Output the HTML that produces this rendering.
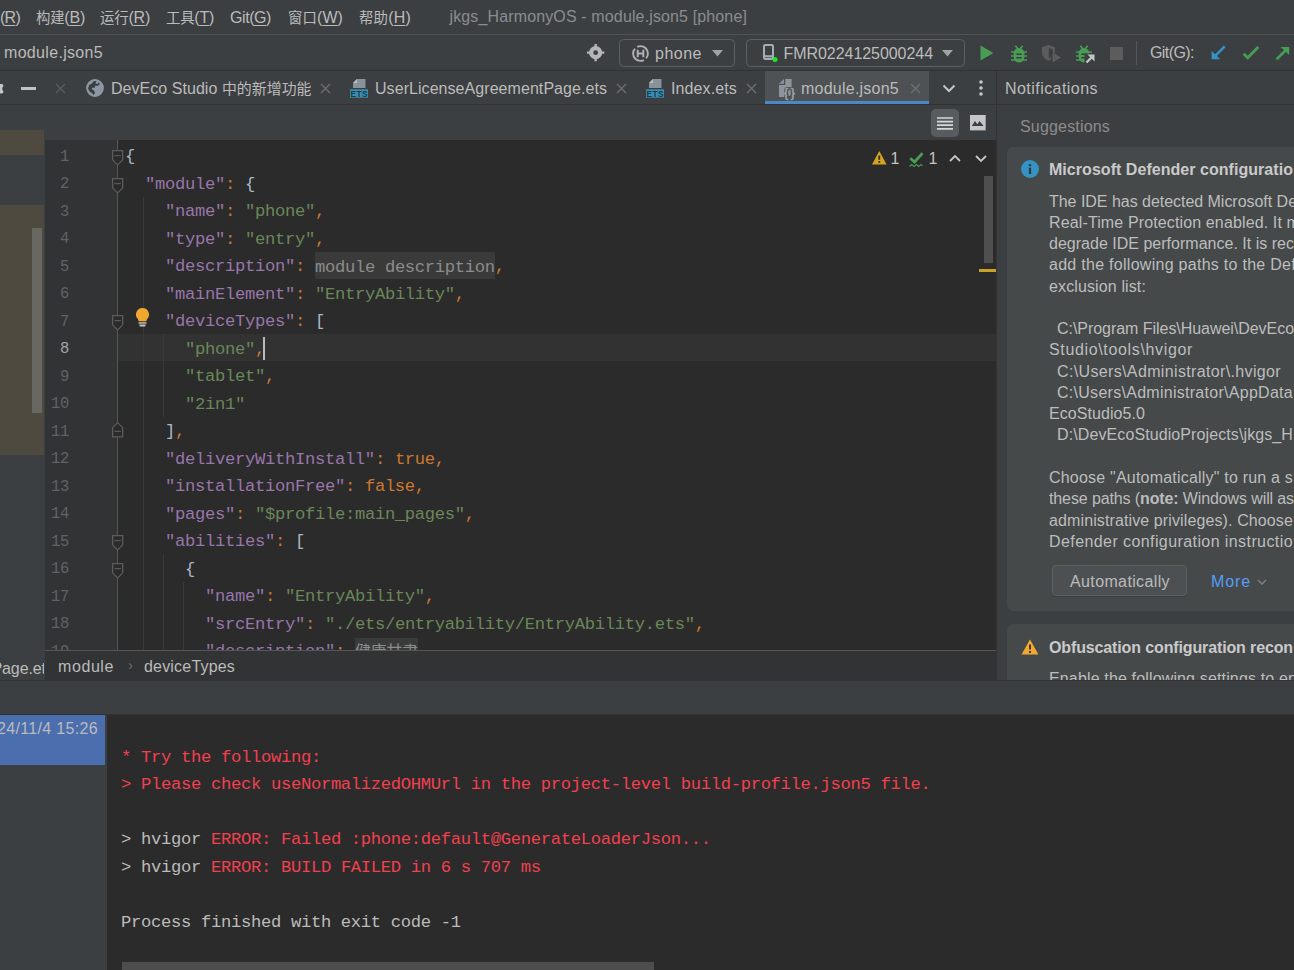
<!DOCTYPE html>
<html><head><meta charset="utf-8"><title>module.json5</title>
<style>
*{box-sizing:border-box;margin:0;padding:0}
html,body{width:1294px;height:970px;overflow:hidden;background:#3c3f41}
body{position:relative;font-family:"Liberation Sans","Noto Sans CJK SC",sans-serif;color:#bbbbbb;font-size:15.5px}
.a{position:absolute;white-space:nowrap}
.m{position:absolute;white-space:pre;font-family:"Liberation Mono","Noto Sans CJK SC",monospace;font-size:17.2px;letter-spacing:-0.32px;line-height:27.5px;height:27.5px;color:#a9b7c6}
.k{color:#9876aa}.s{color:#6a8759}.o{color:#cc7832}
.ln{position:absolute;left:45px;width:24px;text-align:right;transform:scaleX(0.9);transform-origin:100% 50%;color:#606366;font-family:"Liberation Mono",monospace;font-size:17.2px;letter-spacing:-0.32px;line-height:27.5px;height:27.5px}
u{text-decoration:underline;text-underline-offset:2px;text-decoration-thickness:1px}
svg{position:absolute;overflow:visible}
</style></head><body>
<div class="a" style="left:0px;top:34px;width:1294px;height:1px;background:#515151;"></div>
<div class="a" style="left:0px;top:70px;width:1294px;height:1px;background:#323232;"></div>
<svg style="left:586.500px;top:44.400px" width="17.300" height="17.300" viewBox="0 0 17.300 17.300"><circle cx="8.650" cy="8.650" r="4.500" fill="none" stroke="#b4b6b8" stroke-width="4.200"/><path d="M8.650 0v3M8.650 14.300v3M0 8.650h3M14.300 8.650h3" stroke="#b4b6b8" stroke-width="2.400"/></svg>
<div class="a" style="left:619px;top:39px;width:116px;height:27.500px;border:1px solid #5e6163;border-radius:4.500px"></div>
<svg style="left:631.500px;top:44.500px" width="17" height="17" viewBox="0 0 17 17"><circle cx="8.500" cy="8.500" r="7.400" fill="none" stroke="#afb1b3" stroke-width="1.900" stroke-dasharray="20.500 2.750" stroke-dashoffset="-8"/><path d="M5.700 4.700v7.600M11.300 4.700v7.600M5.700 8.500h5.600" stroke="#afb1b3" stroke-width="2" fill="none"/></svg>
<svg style="left:712.200px;top:50.400px" width="11" height="6.500" viewBox="0 0 11 6.500"><path d="M0 0h11L5.500 6.500z" fill="#a0a2a4"/></svg>
<div class="a" style="left:746px;top:39px;width:218.700px;height:27.500px;border:1px solid #5e6163;border-radius:4.500px"></div>
<svg style="left:762.300px;top:44.400px" width="16" height="18" viewBox="0 0 16 18"><rect x="2" y="1" width="9" height="14" rx="1.200" fill="none" stroke="#a4adb4" stroke-width="2"/><path d="M2 12.300h9" stroke="#a4adb4" stroke-width="2.200"/><circle cx="13" cy="15.500" r="2.500" fill="#1ee81e"/></svg>
<svg style="left:942.200px;top:50.400px" width="11" height="6.500" viewBox="0 0 11 6.500"><path d="M0 0h11L5.500 6.500z" fill="#a0a2a4"/></svg>
<svg style="left:980px;top:45px" width="14" height="16" viewBox="0 0 14 16"><path d="M0.5 0.5L13.5 8L0.5 15.5z" fill="#499c54"/></svg>
<svg style="left:1011px;top:44.500px" width="16" height="18" viewBox="0 0 16 18"><rect x="2.600" y="3" width="10.800" height="14.500" rx="5.400" fill="#499c54"/><path d="M0 7h16M0 11h16M0 15h16" stroke="#499c54" stroke-width="1.700"/><path d="M4.300 0.700l2.700 3.300M11.700 0.700l-2.700 3.300" stroke="#499c54" stroke-width="1.700" fill="none"/><path d="M5.300 9.300h5.400M5.300 12.700h5.400" stroke="#3c3f41" stroke-width="1.400"/></svg>
<svg style="left:1042px;top:45px" width="20" height="18" viewBox="0 0 20 18"><path d="M0 2.200L6.500 0L13 2.200V7.500C13 11.500 10.500 14 6.500 15.500C2.500 14 0 11.500 0 7.500z" fill="#5c5c5c"/><path d="M6.800 3v10.500c2.600-1 4-3 4-6V4.300z" fill="#3c3f41"/><path d="M9 6L20 12L9 18z" fill="#3c3f41"/><path d="M10.500 7.500L19 12.500L10.500 17.500z" fill="#5c5c5c"/></svg>
<svg style="left:1076px;top:44.500px" width="19" height="19" viewBox="0 0 19 19"><rect x="2.600" y="3" width="10.800" height="14.500" rx="5.400" fill="#499c54"/><path d="M0 7h16M0 11h16M0 15h16" stroke="#499c54" stroke-width="1.700"/><path d="M4.300 0.700l2.700 3.300M11.700 0.700l-2.700 3.300" stroke="#499c54" stroke-width="1.700" fill="none"/><path d="M5.300 9.300h5.400M5.300 12.700h5.400" stroke="#3c3f41" stroke-width="1.400"/><rect x="8.500" y="8.500" width="11" height="11" fill="#3c3f41"/><path d="M10.500 17.500L17 11" stroke="#c4c6c8" stroke-width="2.400" fill="none"/><path d="M11.500 9.500h7v7z" fill="#c4c6c8"/></svg>
<div class="a" style="left:1110px;top:47px;width:12.5px;height:12.5px;background:#5c5c5c;"></div>
<div class="a" style="left:1136px;top:41px;width:1px;height:24px;background:#555555;"></div>
<svg style="left:1200px;top:38px" width="94" height="30" viewBox="0 0 94 30"><path d="M24.700 8.400L15.500 17.600" stroke="#3592c4" stroke-width="2.600"/><path d="M11.600 12.700V21.200H20.300z" fill="#3592c4"/><path d="M43.700 15.800L47.700 19.800L58.300 8.900" stroke="#499c54" stroke-width="2.800" fill="none"/><path d="M76.600 21.200L85.500 12.500" stroke="#499c54" stroke-width="2.600"/><path d="M80.600 9.100H89.200V17.100z" fill="#499c54"/></svg>
<div class="a" style="left:0px;top:104px;width:1294px;height:1px;background:#323232;"></div>
<svg style="left:0;top:83.500px" width="4" height="9.500" viewBox="0 0 4 9.500"><path d="M0 0H1.800L3.300 0.800V2.600L2.300 3.400V6.100L3.300 6.900V8.700L1.800 9.500H0z" fill="#c4c6c8"/></svg>
<div class="a" style="left:20.5px;top:87px;width:15px;height:2.5px;background:#c0c2c4;"></div>
<svg style="left:55px;top:83px" width="11" height="11" viewBox="0 0 11 11"><path d="M1 1l9 9M10 1l-9 9" stroke="#5a5d5f" stroke-width="1.300" fill="none"/></svg>
<svg style="left:86px;top:79px" width="18" height="18" viewBox="0 0 18 18"><circle cx="9" cy="9" r="8.200" fill="#8b98a3" stroke="#8b98a3" stroke-width="1.400"/><path d="M2 9.500L3.200 6L6 4.500L7.500 2.200L10.500 2L9.500 4.500L11.500 5L12.500 3.500L14 5L11.500 7L9.500 6.500L8.500 9L6.500 8.500L5.500 10L8 11.500L9 14L7.500 16L5.500 13.500L4 13z" fill="#3c3f41"/></svg>
<svg style="left:320px;top:83px" width="11" height="11" viewBox="0 0 11 11"><path d="M1 1l9 9M10 1l-9 9" stroke="#6e6e6e" stroke-width="1.300" fill="none"/></svg>
<svg style="left:350px;top:79px" width="18" height="19" viewBox="0 0 18 19"><path d="M7 0h8.500v9H3V4z" fill="#8a9299"/><path d="M7 0v4H3z" fill="#b9c0c6"/><rect x="0" y="10.300" width="18" height="8.400" fill="#3a8fb3"/><text x="9.200" y="17.600" font-family="Liberation Sans,sans-serif" font-size="8.300" font-weight="bold" fill="#1c3c4b" text-anchor="middle" letter-spacing="0.500">ETS</text></svg>
<svg style="left:615.5px;top:83px" width="11" height="11" viewBox="0 0 11 11"><path d="M1 1l9 9M10 1l-9 9" stroke="#6e6e6e" stroke-width="1.300" fill="none"/></svg>
<svg style="left:646px;top:79px" width="18" height="19" viewBox="0 0 18 19"><path d="M7 0h8.500v9H3V4z" fill="#8a9299"/><path d="M7 0v4H3z" fill="#b9c0c6"/><rect x="0" y="10.300" width="18" height="8.400" fill="#3a8fb3"/><text x="9.200" y="17.600" font-family="Liberation Sans,sans-serif" font-size="8.300" font-weight="bold" fill="#1c3c4b" text-anchor="middle" letter-spacing="0.500">ETS</text></svg>
<svg style="left:745.5px;top:83px" width="11" height="11" viewBox="0 0 11 11"><path d="M1 1l9 9M10 1l-9 9" stroke="#6e6e6e" stroke-width="1.300" fill="none"/></svg>
<div class="a" style="left:765px;top:71px;width:164px;height:33px;background:#4e5254;"></div>
<div class="a" style="left:765px;top:100.5px;width:164px;height:3.5px;background:#4a88c7;"></div>
<svg style="left:778.800px;top:79px" width="18" height="21" viewBox="0 0 18 21"><path d="M0 4.800L5 0V4.800z" fill="#8c959c"/><path d="M6.300 0H12.600V18H0V6.100H6.300z" fill="#8c959c"/><rect x="5.300" y="8" width="12" height="12.500" rx="3" fill="#4e5254"/><text x="11.700" y="17.800" font-family="Liberation Sans,sans-serif" font-size="12.500" fill="#9aa5ad" text-anchor="middle" letter-spacing="2.600" stroke="#9aa5ad" stroke-width="0.500">{}</text><ellipse cx="10.500" cy="13.700" rx="1.300" ry="3.200" fill="#8c959c"/></svg>
<svg style="left:909.5px;top:83px" width="11" height="11" viewBox="0 0 11 11"><path d="M1 1l9 9M10 1l-9 9" stroke="#6c7072" stroke-width="1.300" fill="none"/></svg>
<svg style="left:942px;top:84px" width="14" height="9" viewBox="0 0 14 9"><path d="M1.500 1.500L7 7l5.500-5.500" stroke="#c4c6c8" stroke-width="2" fill="none"/></svg>
<svg style="left:978px;top:79px" width="6" height="18" viewBox="0 0 6 18"><circle cx="3" cy="3" r="1.800" fill="#c4c6c8"/><circle cx="3" cy="9" r="1.800" fill="#c4c6c8"/><circle cx="3" cy="15" r="1.800" fill="#c4c6c8"/></svg>
<div class="a" style="left:996px;top:71px;width:1px;height:610px;background:#323232;"></div>
<div class="a" style="left:0px;top:130px;width:44px;height:325px;background:#4e4a3f;"></div>
<div class="a" style="left:0px;top:155px;width:44px;height:50px;background:#3c3f41;"></div>
<div class="a" style="left:32px;top:228px;width:10px;height:185px;background:#696761;"></div>
<div class="a" style="left:931px;top:109px;width:28px;height:28px;background:#595c5e;border-radius:5px"></div>
<svg style="left:937px;top:117px" width="16" height="13" viewBox="0 0 16 13"><path d="M0 1h16M0 4.600h16M0 8.200h16M0 11.800h16" stroke="#d4d6d8" stroke-width="1.700"/></svg>
<svg style="left:970px;top:115.300px" width="15.700" height="15.400" viewBox="0 0 15.700 15.400"><rect x="0" y="0" width="15.700" height="15.400" fill="#c4c6c8"/><path d="M1.800 11l3.200-5 2.300 3.300 2.200-3.300 4.200 5z" fill="#3c3f41"/></svg>
<div class="a" style="left:45px;top:140px;width:951px;height:511px;background:#2b2b2b;overflow:hidden">
<div class="a" style="left:0;top:0;width:72px;height:511px;background:#313335"></div>
<div class="a" style="left:72px;top:194px;width:879px;height:27px;background:#323232"></div>
<div class="a" style="left:72px;top:0;width:1px;height:511px;background:#555555"></div>
<div class="a" style="left:98px;top:56.50px;width:1px;height:467.50px;background:#393939"></div>
<div class="a" style="left:118px;top:194.00px;width:1px;height:82.50px;background:#393939"></div>
<div class="a" style="left:118px;top:414.00px;width:1px;height:110.00px;background:#393939"></div>
<div class="a" style="left:138px;top:441.50px;width:1px;height:82.50px;background:#393939"></div>
<div class="ln" style="left:0;top:2.67px;color:#606366">1</div>
<div class="ln" style="left:0;top:30.17px;color:#606366">2</div>
<div class="ln" style="left:0;top:57.67px;color:#606366">3</div>
<div class="ln" style="left:0;top:85.17px;color:#606366">4</div>
<div class="ln" style="left:0;top:112.67px;color:#606366">5</div>
<div class="ln" style="left:0;top:140.17px;color:#606366">6</div>
<div class="ln" style="left:0;top:167.67px;color:#606366">7</div>
<div class="ln" style="left:0;top:195.17px;color:#a4a3a3">8</div>
<div class="ln" style="left:0;top:222.67px;color:#606366">9</div>
<div class="ln" style="left:0;top:250.17px;color:#606366">10</div>
<div class="ln" style="left:0;top:277.67px;color:#606366">11</div>
<div class="ln" style="left:0;top:305.17px;color:#606366">12</div>
<div class="ln" style="left:0;top:332.67px;color:#606366">13</div>
<div class="ln" style="left:0;top:360.17px;color:#606366">14</div>
<div class="ln" style="left:0;top:387.67px;color:#606366">15</div>
<div class="ln" style="left:0;top:415.17px;color:#606366">16</div>
<div class="ln" style="left:0;top:442.67px;color:#606366">17</div>
<div class="ln" style="left:0;top:470.17px;color:#606366">18</div>
<div class="ln" style="left:0;top:497.67px;color:#606366">19</div>
<div class="m" style="left:80px;top:3.27px">{</div>
<div class="m" style="left:80px;top:30.77px">  <span class="k">&quot;module&quot;</span><span class="o">:</span> {</div>
<div class="m" style="left:80px;top:58.27px">    <span class="k">&quot;name&quot;</span><span class="o">:</span> <span class="s">&quot;phone&quot;</span><span class="o">,</span></div>
<div class="m" style="left:80px;top:85.77px">    <span class="k">&quot;type&quot;</span><span class="o">:</span> <span class="s">&quot;entry&quot;</span><span class="o">,</span></div>
<div class="m" style="left:80px;top:113.27px">    <span class="k">&quot;description&quot;</span><span class="o">:</span> <span style="background:#3a3a3a;color:#8c8c8c;padding:5.500px 0 3px">module description</span><span class="o">,</span></div>
<div class="m" style="left:80px;top:140.77px">    <span class="k">&quot;mainElement&quot;</span><span class="o">:</span> <span class="s">&quot;EntryAbility&quot;</span><span class="o">,</span></div>
<div class="m" style="left:80px;top:168.27px">    <span class="k">&quot;deviceTypes&quot;</span><span class="o">:</span> [</div>
<div class="m" style="left:80px;top:195.77px">      <span class="s">&quot;phone&quot;</span><span class="o">,</span></div>
<div class="m" style="left:80px;top:223.27px">      <span class="s">&quot;tablet&quot;</span><span class="o">,</span></div>
<div class="m" style="left:80px;top:250.77px">      <span class="s">&quot;2in1&quot;</span></div>
<div class="m" style="left:80px;top:278.27px">    ]<span class="o">,</span></div>
<div class="m" style="left:80px;top:305.77px">    <span class="k">&quot;deliveryWithInstall&quot;</span><span class="o">:</span> <span class="o">true,</span></div>
<div class="m" style="left:80px;top:333.27px">    <span class="k">&quot;installationFree&quot;</span><span class="o">:</span> <span class="o">false,</span></div>
<div class="m" style="left:80px;top:360.77px">    <span class="k">&quot;pages&quot;</span><span class="o">:</span> <span class="s">&quot;$profile:main_pages&quot;</span><span class="o">,</span></div>
<div class="m" style="left:80px;top:388.27px">    <span class="k">&quot;abilities&quot;</span><span class="o">:</span> [</div>
<div class="m" style="left:80px;top:415.77px">      {</div>
<div class="m" style="left:80px;top:443.27px">        <span class="k">&quot;name&quot;</span><span class="o">:</span> <span class="s">&quot;EntryAbility&quot;</span><span class="o">,</span></div>
<div class="m" style="left:80px;top:470.77px">        <span class="k">&quot;srcEntry&quot;</span><span class="o">:</span> <span class="s">&quot;./ets/entryability/EntryAbility.ets&quot;</span><span class="o">,</span></div>
<div class="m" style="left:80px;top:498.27px">        <span class="k">&quot;description&quot;</span><span class="o">:</span> <span style="background:#3a3a3a;color:#8c8c8c;padding:5.500px 0 3px;font-size:15.800px;letter-spacing:0">健康甘肃</span></div>
<div class="a" style="left:218px;top:197.00px;width:2px;height:23px;background:#bbbbbb"></div>
<svg style="left:66.85px;top:10.00px" width="11.300" height="15.500" viewBox="0 0 11.300 15.500"><path d="M0.650 0.650h10v9.200l-5 5l-5-5z" fill="#2b2b2b" stroke="#5c5c5c" stroke-width="1.300"/><path d="M2.400 5.7h6.500" stroke="#636363" stroke-width="1"/></svg>
<svg style="left:66.85px;top:37.50px" width="11.300" height="15.500" viewBox="0 0 11.300 15.500"><path d="M0.650 0.650h10v9.200l-5 5l-5-5z" fill="#2b2b2b" stroke="#5c5c5c" stroke-width="1.300"/><path d="M2.400 5.7h6.500" stroke="#636363" stroke-width="1"/></svg>
<svg style="left:66.85px;top:175.00px" width="11.300" height="15.500" viewBox="0 0 11.300 15.500"><path d="M0.650 0.650h10v9.200l-5 5l-5-5z" fill="#2b2b2b" stroke="#5c5c5c" stroke-width="1.300"/><path d="M2.400 5.7h6.500" stroke="#636363" stroke-width="1"/></svg>
<svg style="left:66.85px;top:395.00px" width="11.300" height="15.500" viewBox="0 0 11.300 15.500"><path d="M0.650 0.650h10v9.200l-5 5l-5-5z" fill="#2b2b2b" stroke="#5c5c5c" stroke-width="1.300"/><path d="M2.400 5.7h6.500" stroke="#636363" stroke-width="1"/></svg>
<svg style="left:66.85px;top:422.50px" width="11.300" height="15.500" viewBox="0 0 11.300 15.500"><path d="M0.650 0.650h10v9.200l-5 5l-5-5z" fill="#2b2b2b" stroke="#5c5c5c" stroke-width="1.300"/><path d="M2.400 5.7h6.500" stroke="#636363" stroke-width="1"/></svg>
<svg style="left:66.85px;top:281.50px" width="11.300" height="15.500" viewBox="0 0 11.300 15.500"><path d="M0.650 14.850h10v-9.200l-5-5l-5 5z" fill="#2b2b2b" stroke="#5c5c5c" stroke-width="1.300"/><path d="M2.400 9.3h6.500" stroke="#636363" stroke-width="1"/></svg>
<svg style="left:91px;top:167.70px" width="13" height="19" viewBox="0 0 13 19"><path d="M6.500 0a6.500 6.500 0 0 1 4.600 11.100L10.300 13.300H2.700L1.900 11.100A6.500 6.500 0 0 1 6.500 0z" fill="#f2a72e"/><rect x="2.500" y="14.300" width="8" height="1.300" fill="#d4d4d4"/><path d="M3.300 16.400h6.400l-0.500 2h-5.400z" fill="#c4c4c4"/></svg>
<svg style="left:826.7px;top:11px" width="14.600" height="13.400" viewBox="0 0 14.600 13.400"><path d="M7.300 0L14.600 13.400H0z" fill="#d6a321"/><path d="M7.300 4.500v4.300M7.300 10v1.800" stroke="#2b2b2b" stroke-width="1.800"/></svg>
<svg style="left:863.5px;top:11.5px" width="15" height="16" viewBox="0 0 15 16"><path d="M1.300 6.300L5.500 10L13.500 1.200" stroke="#499c54" stroke-width="2.800" fill="none"/><path d="M0.500 14.500l2.300-2 2.300 2 2.300-2 2.300 2 2.300-2 1.500 1.300" stroke="#499c54" stroke-width="1.100" fill="none"/></svg>
<svg style="left:904px;top:13.5px" width="12" height="8" viewBox="0 0 12 8"><path d="M1 7l5-5 5 5" stroke="#c4c6c8" stroke-width="1.800" fill="none"/></svg>
<svg style="left:930px;top:14.800000000000011px" width="12" height="8" viewBox="0 0 12 8"><path d="M1 1l5 5 5-5" stroke="#c4c6c8" stroke-width="1.800" fill="none"/></svg>
<div class="a" style="left:939px;top:36px;width:9px;height:87px;background:#4f4f4f"></div>
<div class="a" style="left:934px;top:129px;width:17px;height:3px;background:#c9a227"></div>
</div>
<div class="a" style="left:45px;top:650px;width:951px;height:1px;background:#555555;"></div>
<div class="a" style="left:45px;top:651px;width:951px;height:29px;background:#313335;"></div>
<div class="a" style="left:0;top:651px;width:44px;height:29px;overflow:hidden"><span class="a" style="left:-8.500px;top:8px;font-size:16px;line-height:20px;letter-spacing:-0.100px">Page.ets</span></div>
<div class="a" style="left:1007.3px;top:146.7px;width:300px;height:464px;background:#45494a;border-radius:6.500px"></div>
<svg style="left:1021px;top:160px" width="18" height="18" viewBox="0 0 18 18"><circle cx="9" cy="9" r="9" fill="#3592c4"/><path d="M9 7.700v6.300" stroke="#35383a" stroke-width="2.300"/><rect x="7.850" y="4.200" width="2.300" height="2" fill="#35383a"/></svg>
<div class="a" style="left:1049px;top:147px;width:245px;height:464px;overflow:hidden"></div>
<div class="a" style="left:1052px;top:565px;width:135px;height:31px;border:1px solid #5e6060;border-radius:4px;background:#4c5052;box-shadow:0 1px 0 #3b3e40"></div>
<svg style="left:1257px;top:578.500px" width="10" height="7" viewBox="0 0 10 7"><path d="M1 1l4 4 4-4" stroke="#7a7e80" stroke-width="1.600" fill="none"/></svg>
<div class="a" style="left:1007.3px;top:624px;width:300px;height:57px;background:#45494a;border-radius:6.500px 6.500px 0 0"></div>
<svg style="left:1021px;top:639px" width="18" height="16" viewBox="0 0 18 16"><path d="M9 0.500L17.500 15.500H0.500z" fill="#f2a72e"/><path d="M9 5.500v5M9 12v2" stroke="#3a3d40" stroke-width="2"/></svg>
<div class="a" style="left:0px;top:714px;width:1294px;height:1px;background:#323232;"></div>
<div class="a" style="left:0px;top:715px;width:105px;height:50px;background:#4b6eaf;"></div>
<div class="a" style="left:106.5px;top:714.5px;width:1188px;height:256px;background:#2b2b2b;"></div>
<div class="m" style="left:121px;top:743.67px;color:#bbbbbb"><span style="color:#f2404f">* Try the following:</span></div>
<div class="m" style="left:121px;top:771.17px;color:#bbbbbb"><span style="color:#f2404f">&gt; Please check useNormalizedOHMUrl in the project-level build-profile.json5 file.</span></div>
<div class="m" style="left:121px;top:826.17px;color:#bbbbbb">&gt; hvigor <span style="color:#f2404f">ERROR: Failed :phone:default@GenerateLoaderJson...</span></div>
<div class="m" style="left:121px;top:853.67px;color:#bbbbbb">&gt; hvigor <span style="color:#f2404f">ERROR: BUILD FAILED in 6 s 707 ms</span></div>
<div class="m" style="left:121px;top:908.67px;color:#bbbbbb">Process finished with exit code -1</div>
<div class="a" style="left:122px;top:962px;width:531.5px;height:8px;background:#4d4d4d;"></div>
<span class="a" style='left:0px;top:7.50px;font-size:16px;line-height:20px;color:#bbbbbb;font-family:"Liberation Sans","Noto Sans CJK SC",sans-serif;letter-spacing:-0.740px;'>(<u>R</u>)</span>
<span class="a" style='left:36px;top:7.50px;font-size:16px;line-height:20px;color:#bbbbbb;font-family:"Liberation Sans","Noto Sans CJK SC",sans-serif;letter-spacing:-0.225px;'><span style="font-size:14.400px">构建</span>(<u>B</u>)</span>
<span class="a" style='left:100px;top:7.50px;font-size:16px;line-height:20px;color:#bbbbbb;font-family:"Liberation Sans","Noto Sans CJK SC",sans-serif;letter-spacing:-0.203px;'><span style="font-size:14.400px">运行</span>(<u>R</u>)</span>
<span class="a" style='left:166px;top:7.50px;font-size:16px;line-height:20px;color:#bbbbbb;font-family:"Liberation Sans","Noto Sans CJK SC",sans-serif;letter-spacing:-0.247px;'><span style="font-size:14.400px">工具</span>(<u>T</u>)</span>
<span class="a" style='left:230px;top:7.50px;font-size:16px;line-height:20px;color:#bbbbbb;font-family:"Liberation Sans","Noto Sans CJK SC",sans-serif;letter-spacing:-0.427px;'>Git(<u>G</u>)</span>
<span class="a" style='left:288px;top:7.50px;font-size:16px;line-height:20px;color:#bbbbbb;font-family:"Liberation Sans","Noto Sans CJK SC",sans-serif;letter-spacing:0.087px;'><span style="font-size:14.400px">窗口</span>(<u>W</u>)</span>
<span class="a" style='left:359px;top:7.50px;font-size:16px;line-height:20px;color:#bbbbbb;font-family:"Liberation Sans","Noto Sans CJK SC",sans-serif;letter-spacing:0.197px;'><span style="font-size:14.400px">帮助</span>(<u>H</u>)</span>
<span class="a" style='left:449.5px;top:6.50px;font-size:16px;line-height:20px;color:#8a8d8f;font-family:"Liberation Sans","Noto Sans CJK SC",sans-serif;letter-spacing:0.133px;'>jkgs_HarmonyOS - module.json5 [phone]</span>
<span class="a" style='left:4px;top:42.50px;font-size:16px;line-height:20px;color:#bbbbbb;font-family:"Liberation Sans","Noto Sans CJK SC",sans-serif;letter-spacing:0.319px;'>module.json5</span>
<span class="a" style='left:655px;top:44.00px;font-size:16px;line-height:20px;color:#bbbbbb;font-family:"Liberation Sans","Noto Sans CJK SC",sans-serif;letter-spacing:0.500px;'>phone</span>
<span class="a" style='left:783.5px;top:44.00px;font-size:16px;line-height:20px;color:#bbbbbb;font-family:"Liberation Sans","Noto Sans CJK SC",sans-serif;letter-spacing:-0.053px;'>FMR0224125000244</span>
<span class="a" style='left:1150px;top:42.50px;font-size:16px;line-height:20px;color:#bbbbbb;font-family:"Liberation Sans","Noto Sans CJK SC",sans-serif;letter-spacing:-0.571px;'>Git(G):</span>
<span class="a" style='left:111px;top:78.50px;font-size:16px;line-height:20px;color:#bbbbbb;font-family:"Liberation Sans","Noto Sans CJK SC",sans-serif;letter-spacing:0.043px;'>DevEco Studio <span style="font-size:14.900px">中的新增功能</span></span>
<span class="a" style='left:375px;top:78.50px;font-size:16px;line-height:20px;color:#bbbbbb;font-family:"Liberation Sans","Noto Sans CJK SC",sans-serif;letter-spacing:0.059px;'>UserLicenseAgreementPage.ets</span>
<span class="a" style='left:671px;top:78.50px;font-size:16px;line-height:20px;color:#bbbbbb;font-family:"Liberation Sans","Noto Sans CJK SC",sans-serif;letter-spacing:0.118px;'>Index.ets</span>
<span class="a" style='left:801px;top:78.50px;font-size:16px;line-height:20px;color:#bbbbbb;font-family:"Liberation Sans","Noto Sans CJK SC",sans-serif;letter-spacing:0.236px;'>module.json5</span>
<span class="a" style='left:1005px;top:78.50px;font-size:16px;line-height:20px;color:#bbbbbb;font-family:"Liberation Sans","Noto Sans CJK SC",sans-serif;letter-spacing:0.450px;'>Notifications</span>
<span class="a" style='left:890.5px;top:149.00px;font-size:16px;line-height:20px;color:#c4c4c4;font-family:"Liberation Sans","Noto Sans CJK SC",sans-serif;letter-spacing:-2.406px;'>1</span>
<span class="a" style='left:928.5px;top:149.00px;font-size:16px;line-height:20px;color:#c4c4c4;font-family:"Liberation Sans","Noto Sans CJK SC",sans-serif;letter-spacing:-2.406px;'>1</span>
<span class="a" style='left:58px;top:656.50px;font-size:16px;line-height:20px;color:#bbbbbb;font-family:"Liberation Sans","Noto Sans CJK SC",sans-serif;letter-spacing:0.586px;'>module</span>
<span class="a" style='left:128px;top:655.00px;font-size:15px;line-height:20px;color:#6e6e6e;font-family:"Liberation Sans","Noto Sans CJK SC",sans-serif;'>›</span>
<span class="a" style='left:144px;top:656.50px;font-size:16px;line-height:20px;color:#bbbbbb;font-family:"Liberation Sans","Noto Sans CJK SC",sans-serif;letter-spacing:0.188px;'>deviceTypes</span>
<span class="a" style='left:1020px;top:117.00px;font-size:16px;line-height:20px;color:#8c8c8c;font-family:"Liberation Sans","Noto Sans CJK SC",sans-serif;letter-spacing:0.176px;'>Suggestions</span>
<span class="a" style='left:1049px;top:159.50px;font-size:16px;line-height:20px;color:#cacaca;font-family:"Liberation Sans","Noto Sans CJK SC",sans-serif;font-weight:bold;letter-spacing:0.042px;'>Microsoft Defender configuratio</span>
<span class="a" style='left:1049px;top:191.50px;font-size:16px;line-height:20px;color:#bdbdbd;font-family:"Liberation Sans","Noto Sans CJK SC",sans-serif;letter-spacing:-0.030px;'>The IDE has detected Microsoft De</span>
<span class="a" style='left:1049px;top:212.77px;font-size:16px;line-height:20px;color:#bdbdbd;font-family:"Liberation Sans","Noto Sans CJK SC",sans-serif;letter-spacing:0.129px;'>Real-Time Protection enabled. It m</span>
<span class="a" style='left:1049px;top:234.04px;font-size:16px;line-height:20px;color:#bdbdbd;font-family:"Liberation Sans","Noto Sans CJK SC",sans-serif;letter-spacing:0.013px;'>degrade IDE performance. It is rec</span>
<span class="a" style='left:1049px;top:255.31px;font-size:16px;line-height:20px;color:#bdbdbd;font-family:"Liberation Sans","Noto Sans CJK SC",sans-serif;letter-spacing:0.279px;'>add the following paths to the Def</span>
<span class="a" style='left:1049px;top:276.58px;font-size:16px;line-height:20px;color:#bdbdbd;font-family:"Liberation Sans","Noto Sans CJK SC",sans-serif;letter-spacing:0.123px;'>exclusion list:</span>
<span class="a" style='left:1057px;top:319.12px;font-size:16px;line-height:20px;color:#bdbdbd;font-family:"Liberation Sans","Noto Sans CJK SC",sans-serif;letter-spacing:-0.043px;'>C:\Program Files\Huawei\DevEco</span>
<span class="a" style='left:1049px;top:340.39px;font-size:16px;line-height:20px;color:#bdbdbd;font-family:"Liberation Sans","Noto Sans CJK SC",sans-serif;letter-spacing:0.650px;'>Studio\tools\hvigor</span>
<span class="a" style='left:1057px;top:361.66px;font-size:16px;line-height:20px;color:#bdbdbd;font-family:"Liberation Sans","Noto Sans CJK SC",sans-serif;letter-spacing:0.354px;'>C:\Users\Administrator\.hvigor</span>
<span class="a" style='left:1057px;top:382.93px;font-size:16px;line-height:20px;color:#bdbdbd;font-family:"Liberation Sans","Noto Sans CJK SC",sans-serif;letter-spacing:0.279px;'>C:\Users\Administrator\AppData</span>
<span class="a" style='left:1049px;top:404.20px;font-size:16px;line-height:20px;color:#bdbdbd;font-family:"Liberation Sans","Noto Sans CJK SC",sans-serif;letter-spacing:0.068px;'>EcoStudio5.0</span>
<span class="a" style='left:1057px;top:425.47px;font-size:16px;line-height:20px;color:#bdbdbd;font-family:"Liberation Sans","Noto Sans CJK SC",sans-serif;letter-spacing:0.101px;'>D:\DevEcoStudioProjects\jkgs_H</span>
<span class="a" style='left:1049px;top:468.01px;font-size:16px;line-height:20px;color:#bdbdbd;font-family:"Liberation Sans","Noto Sans CJK SC",sans-serif;letter-spacing:0.205px;'>Choose &quot;Automatically&quot; to run a s</span>
<span class="a" style='left:1049px;top:489.28px;font-size:16px;line-height:20px;color:#bdbdbd;font-family:"Liberation Sans","Noto Sans CJK SC",sans-serif;letter-spacing:-0.117px;'>these paths (<b>note:</b> Windows will as</span>
<span class="a" style='left:1049px;top:510.55px;font-size:16px;line-height:20px;color:#bdbdbd;font-family:"Liberation Sans","Noto Sans CJK SC",sans-serif;letter-spacing:0.114px;'>administrative privileges). Choose</span>
<span class="a" style='left:1049px;top:531.82px;font-size:16px;line-height:20px;color:#bdbdbd;font-family:"Liberation Sans","Noto Sans CJK SC",sans-serif;letter-spacing:0.413px;'>Defender configuration instructio</span>
<span class="a" style='left:1070px;top:571.50px;font-size:16px;line-height:20px;color:#bbbbbb;font-family:"Liberation Sans","Noto Sans CJK SC",sans-serif;letter-spacing:0.373px;'>Automatically</span>
<span class="a" style='left:1211px;top:571.50px;font-size:16px;line-height:20px;color:#589df6;font-family:"Liberation Sans","Noto Sans CJK SC",sans-serif;letter-spacing:0.887px;'>More</span>
<span class="a" style='left:1049px;top:637.50px;font-size:16px;line-height:20px;color:#cacaca;font-family:"Liberation Sans","Noto Sans CJK SC",sans-serif;font-weight:bold;letter-spacing:-0.130px;'>Obfuscation configuration recon</span>
<span class="a" style='left:1049px;top:669.00px;font-size:16px;line-height:20px;color:#bdbdbd;font-family:"Liberation Sans","Noto Sans CJK SC",sans-serif;letter-spacing:0.148px;'>Enable the following settings to en</span>
<span class="a" style='left:-3px;top:719.00px;font-size:16px;line-height:20px;color:#bbbbbb;font-family:"Liberation Sans","Noto Sans CJK SC",sans-serif;letter-spacing:0.332px;'>24/11/4 15:26</span>
<div class="a" style="left:0;top:680px;width:1294px;height:34px;background:#3c3f41;border-top:1px solid #323232"></div>
</body></html>
